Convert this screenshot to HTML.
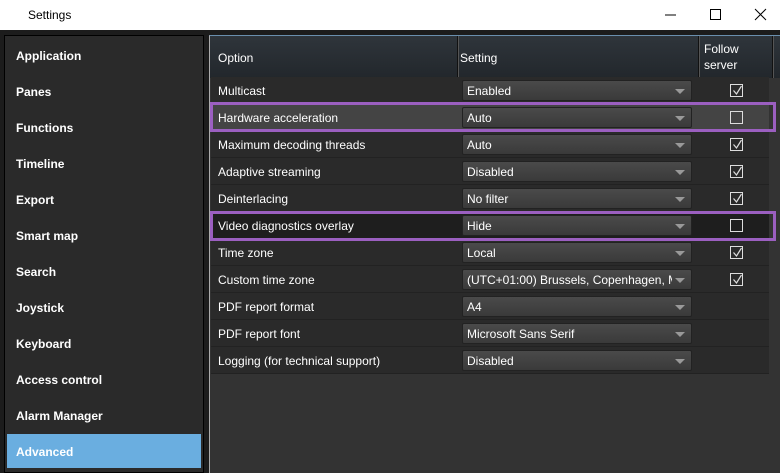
<!DOCTYPE html><html><head><style>
*{margin:0;padding:0;box-sizing:border-box}
body{width:780px;height:473px;background:#1c1c1c;font-family:"Segoe UI","Liberation Sans",sans-serif;font-size:12px;color:#fff;position:relative;overflow:hidden}
.tb{position:absolute;left:0;top:0;width:780px;height:30px;background:#fff;color:#000}
.tb .t{position:absolute;left:28px;top:8px;font-size:12px}
.left{position:absolute;left:4px;top:35px;width:200px;height:438px;background:#2a2a2a;border:1px solid #000}
.left div.it{position:absolute;left:11px;font-weight:bold;font-size:12px}
.left div.sel{position:absolute;left:2px;top:398px;width:194px;height:34px;background:#6aaee0}
.right{position:absolute;left:209px;top:35px;width:571px;height:438px;background:#333;border-left:1px solid #aaa;border-top:1px solid #6a8fae}
.hdr{position:absolute;left:0;top:0;width:570px;height:42px;background:linear-gradient(#2f353b,#22272c)}
.hdr span{position:absolute;font-size:12px}
.vl{position:absolute;top:0;width:2px;height:42px;border-left:1px solid #111;border-right:1px solid #555}
.row{position:absolute;left:2px;width:558px;height:27px;background:#2a2a2a;border-bottom:1px solid #222}
.row .o{position:absolute;left:7px;top:7px}
.dd{position:absolute;left:251px;top:3px;width:230px;height:21px;background:linear-gradient(#4a4a4a,#3a3a3a);border:1px solid #222;border-radius:2px}
.dd span{position:absolute;left:4px;top:3px;white-space:nowrap;overflow:hidden;width:205px}
.dd i{position:absolute;right:6px;top:8px;border-left:5px solid transparent;border-right:5px solid transparent;border-top:5px solid #999}
.cb{position:absolute;left:519px;top:7px;width:13px;height:13px;border:1px solid #ddd}
.cb svg{position:absolute;left:1px;top:0}
.pur{position:absolute;left:210px;width:566px;height:30px;border:3px solid #9b5fc0}
</style></head><body>
<div class="tb"><span class="t">Settings</span>
<svg style="position:absolute;left:660px;top:8px" width="110" height="14"><line x1="5" y1="7" x2="16" y2="7" stroke="#000"/><rect x="50.5" y="1.5" width="10" height="10" fill="none" stroke="#000"/><path d="M95 1L106 12M106 1L95 12" stroke="#000"/></svg></div>
<div class="left">
<div class="sel"></div>
<div class="it" style="top:13px">Application</div><div class="it" style="top:49px">Panes</div><div class="it" style="top:85px">Functions</div><div class="it" style="top:121px">Timeline</div><div class="it" style="top:157px">Export</div><div class="it" style="top:193px">Smart map</div><div class="it" style="top:229px">Search</div><div class="it" style="top:265px">Joystick</div><div class="it" style="top:301px">Keyboard</div><div class="it" style="top:337px">Access control</div><div class="it" style="top:373px">Alarm Manager</div>
<div class="it" style="top:409px">Advanced</div>
</div>
<div class="right">
<div class="hdr"><span style="left:8px;top:15px">Option</span><div class="vl" style="left:247px"></div><span style="left:250px;top:15px">Setting</span><div class="vl" style="left:488px"></div><span style="left:494px;top:5px;line-height:16px">Follow<br>server</span><div class="vl" style="left:562px"></div></div>
</div>
<div id="rows"></div>
<script>
var d=[["Multicast","Enabled",1],["Hardware acceleration","Auto",0],["Maximum decoding threads","Auto",1],["Adaptive streaming","Disabled",1],["Deinterlacing","No filter",1],["Video diagnostics overlay","Hide",0],["Time zone","Local",1],["Custom time zone","(UTC+01:00) Brussels, Copenhagen, Madrid",1],["PDF report format","A4",2],["PDF report font","Microsoft Sans Serif",2],["Logging (for technical support)","Disabled",2]];
var h="";d.forEach(function(r,i){var y=77+i*27;var bg=i==1?"#444":(i==5?"#1e1e1e":"#2a2a2a");
h+='<div class="row" style="left:211px;top:'+y+'px;background:'+bg+'"><span class="o">'+r[0]+'</span><div class="dd"><span>'+r[1]+'</span><i></i></div>'+(r[2]<2?'<div class="cb">'+(r[2]?'<svg width="11" height="11"><path d="M1.5 5.5L4.5 9L9.5 1" stroke="#ddd" fill="none" stroke-width="1.2"/></svg>':'')+'</div>':'')+'</div>';});
h+='<div class="pur" style="top:102px"></div><div class="pur" style="top:211px"></div>';
document.getElementById("rows").innerHTML=h;
</script>
</body></html>
